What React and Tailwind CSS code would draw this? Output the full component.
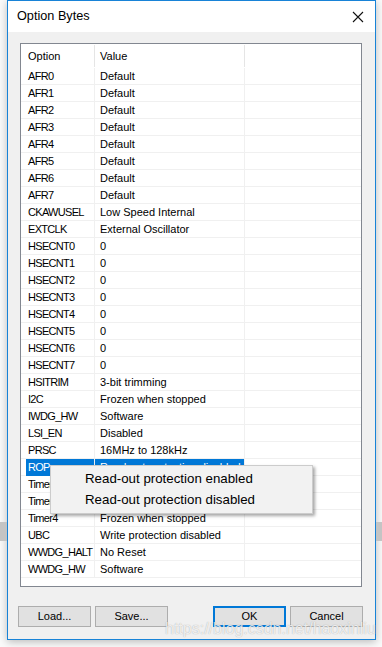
import React from "react";

const rows = [
    ["AFR0", "Default"],
    ["AFR1", "Default"],
    ["AFR2", "Default"],
    ["AFR3", "Default"],
    ["AFR4", "Default"],
    ["AFR5", "Default"],
    ["AFR6", "Default"],
    ["AFR7", "Default"],
    ["CKAWUSEL", "Low Speed Internal"],
    ["EXTCLK", "External Oscillator"],
    ["HSECNT0", "0"],
    ["HSECNT1", "0"],
    ["HSECNT2", "0"],
    ["HSECNT3", "0"],
    ["HSECNT4", "0"],
    ["HSECNT5", "0"],
    ["HSECNT6", "0"],
    ["HSECNT7", "0"],
    ["HSITRIM", "3-bit trimming"],
    ["I2C", "Frozen when stopped"],
    ["IWDG_HW", "Software"],
    ["LSI_EN", "Disabled"],
    ["PRSC", "16MHz to 128kHz"],
    ["ROP", "Read-out protection disabled"],
    ["Timer2", "Frozen when stopped"],
    ["Timer3", "Frozen when stopped"],
    ["Timer4", "Frozen when stopped"],
    ["UBC", "Write protection disabled"],
    ["WWDG_HALT", "No Reset"],
    ["WWDG_HW", "Software"],
];

function Button({ label, primary }) {
    return (
        <button
            className={`w-[73px] h-[21px] bg-[#e1e1e1] text-[11px] text-black flex items-center justify-center ${primary ? "border-2 border-[#0078d7]" : "border border-[#adadad]"}`}>
            {label}
        </button>
    );
}

export default function App() {
    const selected = "ROP";

    return (
        <div className="relative w-[382px] h-[647px] overflow-hidden bg-[#fafafa] font-['Liberation_Sans',Arial,sans-serif] text-black">
            {/* window behind the dialog */}
            <div className="absolute left-0 top-[522px] w-[7px] h-[19px] bg-[#c4c4c4]" />
            <div className="absolute right-0 top-[522px] w-[6px] h-[19px] bg-[#c4c4c4]" />

            <div className="ml-[7px] w-[369px] h-[640px] border border-[#1883d7] bg-[#f0f0f0] flex flex-col shadow-[0_2px_8px_rgba(0,0,0,0.25)]">
                <div className="h-[31px] bg-white flex items-center justify-between pl-[9px] pr-[10px]">
                    <span className="text-[12.7px]">Option Bytes</span>
                    <svg width="12" height="12" viewBox="0 0 12 12" className="mr-[1px]">
                        <path d="M1 1L11 11M11 1L1 11" stroke="#111" strokeWidth="1.1" />
                    </svg>
                </div>

                <div className="pt-[11px] pl-[12px]">
                    <div className="w-[342px] h-[544px] border border-[#828790] bg-white">
                        <div className="grid grid-cols-[74px_150px_1fr] h-[24px] text-[11px] leading-[17px]">
                            <div className="pl-[7px] flex items-center border-r border-[#e5e5e5] my-[1px]">Option</div>
                            <div className="pl-[5px] flex items-center border-r border-[#e5e5e5] my-[1px]">Value</div>
                            <div />
                        </div>
                        {rows.map(([name, value]) => {
                            const isSel = name === selected;
                            return (
                                <div key={name} className="grid grid-cols-[74px_150px_1fr] h-[17px] border-b border-[#f0f0f0] text-[11px] leading-[17px]">
                                    <div className="border-r border-[#f0f0f0] pl-[5px]">
                                        <div className={`h-full pl-[2px] tracking-[-0.7px] whitespace-nowrap overflow-hidden ${isSel ? "bg-[#0078d7] text-white" : ""}`}>{name}</div>
                                    </div>
                                    <div className={`border-r border-[#f0f0f0] pl-[5px] whitespace-nowrap overflow-hidden ${isSel ? "bg-[#0078d7] text-white" : ""}`}>{value}</div>
                                    <div />
                                </div>
                            );
                        })}
                    </div>
                </div>

                <div className="flex items-center pt-[19px] pl-[10px]">
                    <Button label="Load..." />
                    <div className="w-[4px]" />
                    <Button label="Save..." />
                    <div className="w-[45px]" />
                    <Button label="OK" primary />
                    <div className="w-[4px]" />
                    <Button label="Cancel" />
                </div>
            </div>

            {/* context menu over the ROP row */}
            <div className="absolute left-[50px] top-[465px] w-[263px] h-[49px] bg-[#f2f2f2] border border-[#cccccc] py-[2px] shadow-[2px_2px_3px_rgba(0,0,0,0.35)]">
                <div className="h-[21px] pl-[34px] flex items-center text-[13.3px]">Read-out protection enabled</div>
                <div className="h-[21px] pl-[34px] flex items-center text-[13.3px]">Read-out protection disabled</div>
            </div>

            {/* csdn watermark */}
            <div className="absolute left-[165px] top-[617px] text-[16px] text-white/80 [text-shadow:0_0_1px_rgba(0,0,0,0.35)] font-['Liberation_Sans',Arial,sans-serif]">
                https://blog.csdn.net/haoxinliu
            </div>
        </div>
    );
}
